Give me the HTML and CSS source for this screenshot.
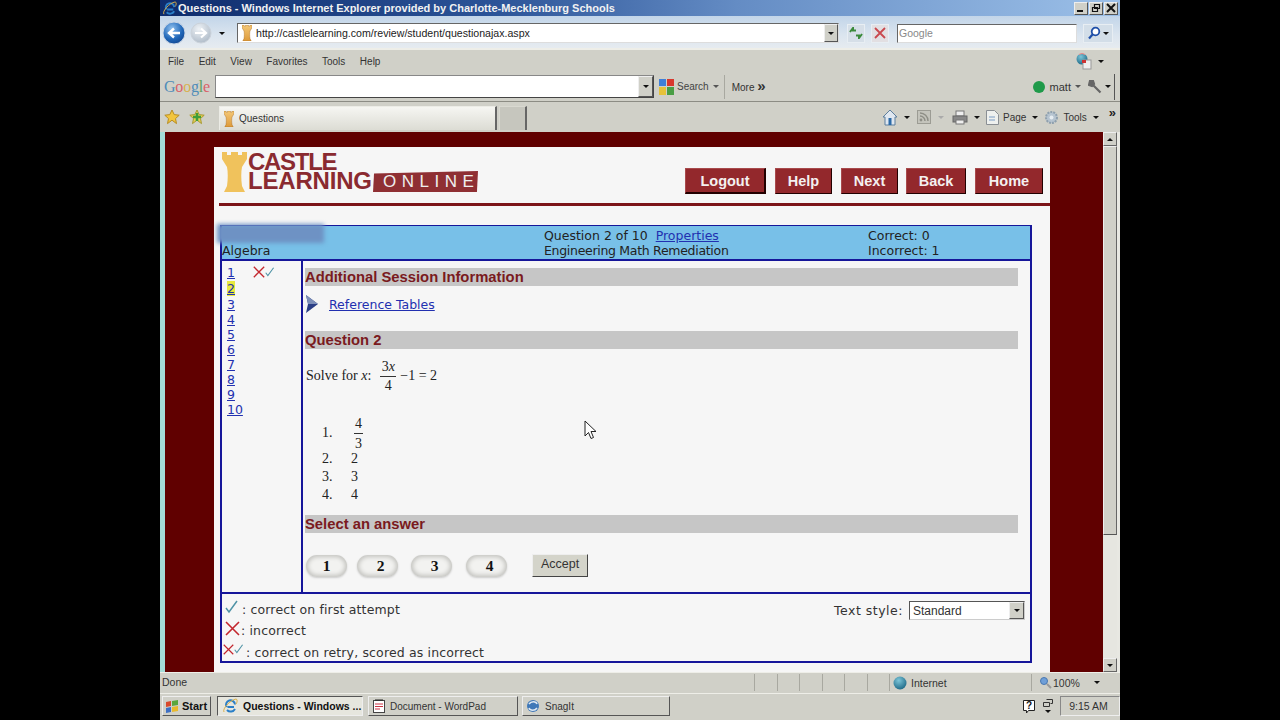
FILE: index.html
```html
<!DOCTYPE html>
<html lang="en">
<head>
  <meta charset="UTF-8" />
  <title>Questions - Windows Internet Explorer</title>
  <link rel="stylesheet" href="styles.css">
</head>
<body>
  <svg class="defs" width="0" height="0">
    <defs>
      <linearGradient id="tabTower" x1="0" x2="0" y1="0" y2="1"><stop offset="0" stop-color="#f4c877"/><stop offset="1" stop-color="#dd9a3a"/></linearGradient>
      <radialGradient id="blueBall" cx="0.4" cy="0.3" r="0.8"><stop offset="0" stop-color="#8fc0ee"/><stop offset="0.6" stop-color="#1f66b8"/><stop offset="1" stop-color="#0f3f86"/></radialGradient>
      <radialGradient id="greyBall" cx="0.4" cy="0.3" r="0.8"><stop offset="0" stop-color="#eef2f6"/><stop offset="1" stop-color="#a9b6c4"/></radialGradient>
      <radialGradient id="globeBall" cx="0.4" cy="0.3" r="0.8"><stop offset="0" stop-color="#7cc5d8"/><stop offset="1" stop-color="#14607f"/></radialGradient>
      <symbol id="tower" viewBox="0 0 25 40"><path d="M0 0h5v3h4V0h7v3h4V0h5v7l-5 8c-1 5-1 12 0 19l3 6H2l3-6c1-7 1-14 0-19L0 7z"/></symbol>
      <symbol id="check" viewBox="0 0 14 14"><path d="M1 8l3 4 8-11" fill="none" stroke="#4f93a6" stroke-width="1.5"/></symbol>
      <symbol id="cross" viewBox="0 0 15 15"><path d="M1 1l13 13M14 1L1 14" fill="none" stroke="#c3272e" stroke-width="1.6"/></symbol>
      <symbol id="iconE" viewBox="0 0 16 16"><path d="M12 9H5.500M4.600 9a4.500 4.500 0 1 1 8.400-2.500M13 11a5 5 0 0 1-8 1" fill="none" stroke="#2a7fc8" stroke-width="2"/><path d="M2 14C0 11 8 2 14 1c2 0 1 4 0 5" fill="none" stroke="#d9b04a" stroke-width="1"/></symbol>
    </defs>
  </svg>

  <div class="screen">
    <div class="titlebar">
      <svg class="ie-icon" width="16" height="16"><use href="#iconE"/></svg>
      <span class="title-text">Questions - Windows Internet Explorer provided by Charlotte-Mecklenburg Schools</span>
      <div class="win-btns">
        <span class="win-btn"><svg width="10" height="10"><path d="M1 8h6" stroke="#111" stroke-width="2"/></svg></span>
        <span class="win-btn"><svg width="10" height="10"><path d="M3.500 1.500h5v4h-5zM1.500 4.500h5v4h-5z" fill="none" stroke="#111" stroke-width="1.200"/></svg></span>
        <span class="win-btn"><svg width="10" height="10"><path d="M1 1l8 8M9 1L1 9" stroke="#111" stroke-width="2"/></svg></span>
      </div>
    </div>

    <div class="addressbar">
      <svg class="nav-back" width="24" height="24"><circle cx="12" cy="12" r="11" fill="url(#blueBall)" stroke="#cbd7e6"/><path d="M18 12H8M12 7.500L7 12l5 4.500" fill="none" stroke="#fff" stroke-width="2.400"/></svg>
      <svg class="nav-fwd" width="22" height="22"><circle cx="11" cy="11" r="10" fill="url(#greyBall)" stroke="#cbd2da"/><path d="M5 11h10M11 6.500l5 4.500-5 4.500" fill="none" stroke="#fff" stroke-width="2.200"/></svg>
      <span class="arrow dark nav-drop"></span>
      <div class="address-field">
        <svg class="tower-small" width="10" height="16" fill="url(#tabTower)" stroke="#a5651d" stroke-width="1"><use href="#tower"/></svg>
        <span class="url">http://castlelearning.com/review/student/questionajax.aspx</span>
        <span class="drop-btn"><span class="arrow dark"></span></span>
      </div>
      <span class="tool-btn refresh"><svg width="14" height="12"><path d="M1 5l3-4v2.500h3M13 7l-3 4V8.500H7" fill="none" stroke="#3a8a3a" stroke-width="2"/></svg></span>
      <span class="tool-btn stop"><svg width="12" height="12"><path d="M1 1l10 10M11 1L1 11" stroke="#c9484e" stroke-width="1.800"/></svg></span>
      <div class="search-field">Google</div>
      <span class="search-btn">
        <svg width="14" height="14"><circle cx="8.500" cy="5.500" r="3.800" fill="#fff" stroke="#1f4fa8" stroke-width="1.800"/><path d="M6 8l-4 4.500" stroke="#1f4fa8" stroke-width="2.200"/></svg>
        <span class="arrow dark"></span>
      </span>
    </div>

    <div class="menubar">
      <nav class="menu-items">
        <span>File</span><span>Edit</span><span>View</span><span>Favorites</span><span>Tools</span><span>Help</span>
      </nav>
      <div class="menu-right">
        <svg width="16" height="18"><circle cx="6" cy="7" r="5.500" fill="url(#globeBall)"/><path d="M3 2.500a5 5 0 0 1 6 0" stroke="#e88" fill="none"/><rect x="7" y="8" width="8" height="9" fill="#eee" stroke="#999"/><rect x="6" y="8" width="4" height="3" fill="#c33"/></svg>
        <span class="arrow dark"></span>
      </div>
    </div>

    <div class="googlebar">
      <span class="g-logo"><b class="g-blue">G</b><b class="g-red">o</b><b class="g-yellow">o</b><b class="g-blue">g</b><b class="g-green">l</b><b class="g-red">e</b></span>
      <div class="g-input"><span class="drop-btn"><span class="arrow dark"></span></span></div>
      <div class="g-search">
        <svg width="15" height="16"><rect x="0" y="0" width="7" height="7" fill="#3f7fd8"/><rect x="8" y="0" width="7" height="7" fill="#d8382e"/><rect x="0" y="8" width="7" height="8" fill="#e6c23a"/><rect x="8" y="8" width="7" height="8" fill="#4a9e45"/></svg>
        <span>Search</span><span class="arrow"></span>
      </div>
      <span class="g-sep"></span>
      <span class="g-more">More <b>&raquo;</b></span>
      <div class="g-user">
        <span class="status-dot"></span><span>matt</span><span class="arrow"></span>
        <svg class="wrench" width="14" height="14"><path d="M12.500 12.500L5 5M2 1l3 0 1 3-2 2-3-1z" fill="#666" stroke="#666" stroke-width="2.200"/></svg>
        <span class="arrow dark"></span>
      </div>
    </div>

    <div class="tabbar">
      <svg class="fav-star" width="16" height="16"><path d="M8 1l2.200 4.600 5 .6-3.700 3.400 1 5L8 11.200 3.500 14.600l1-5L.8 6.200l5-.6z" fill="#f2c53d" stroke="#b88d22"/></svg>
      <svg class="fav-add" width="16" height="16"><path d="M8 1l2.200 4.600 5 .6-3.700 3.400 1 5L8 11.200 3.500 14.600l1-5L.8 6.200l5-.6z" fill="#e6cf55" stroke="#a89a32"/><path d="M8 4v8M4 8h8" stroke="#3f9e3a" stroke-width="2.500"/></svg>
      <div class="tab-active">
        <svg class="tower-small" width="10" height="16" fill="url(#tabTower)" stroke="#a5651d" stroke-width="1"><use href="#tower"/></svg>
        <span>Questions</span>
      </div>
      <div class="tab-new"></div>
      <div class="cmd-bar">
        <svg width="16" height="17"><path d="M1 8l7-7 7 7h-2v8H3V8z" fill="#dfe7f0" stroke="#5d7f9e"/><rect x="6.500" y="9" width="3" height="7" fill="#2a6aa8"/></svg>
        <span class="arrow dark"></span>
        <svg class="cmd-rss" width="14" height="14"><rect x=".5" y=".5" width="13" height="13" fill="#c4c4bc" stroke="#9c9c94"/><circle cx="4" cy="10" r="1.400" fill="#8e8e86"/><path d="M3 6a5 5 0 0 1 5 5M3 3a8 8 0 0 1 8 8" fill="none" stroke="#8e8e86" stroke-width="1.400"/></svg>
        <span class="arrow cmd-rss-arrow"></span>
        <svg class="cmd-print" width="16" height="15"><rect x="4" y="1" width="8" height="5" fill="#eee" stroke="#777"/><rect x="1" y="6" width="14" height="6" fill="#888" stroke="#666"/><rect x="4" y="10" width="8" height="4" fill="#eee" stroke="#777"/></svg>
        <span class="arrow dark"></span>
        <svg class="cmd-page" width="13" height="15"><path d="M.5.5h8l4 4v10H.5z" fill="#eef0ee" stroke="#8a8f94"/><path d="M3 7h6M3 10h6" stroke="#7a9cc4"/></svg>
        <span class="cmd-label">Page</span>
        <span class="arrow dark"></span>
        <svg class="cmd-gear" width="15" height="15"><circle cx="7.500" cy="7.500" r="5.500" fill="#b6c4d0" stroke="#8fa0ae" stroke-width="2" stroke-dasharray="2 1"/><circle cx="7.500" cy="7.500" r="2" fill="#e6ecf1"/></svg>
        <span class="cmd-label">Tools</span>
        <span class="arrow dark"></span>
        <b class="cmd-more">&raquo;</b>
      </div>
    </div>

    <div class="viewport">
      <div class="canvas">
        <div class="page">
          <header class="page-head">
            <div class="logo">
              <svg class="logo-tower" width="25" height="40" fill="#f0c25c"><use href="#tower"/></svg>
              <div class="logo-words">
                <div class="logo-castle">CASTLE</div>
                <div class="logo-learning">LEARNING</div>
              </div>
              <div class="logo-online">ONLINE</div>
            </div>
            <nav class="head-btns">
              <a class="head-btn logout">Logout</a>
              <a class="head-btn help">Help</a>
              <a class="head-btn next">Next</a>
              <a class="head-btn back">Back</a>
              <a class="head-btn home">Home</a>
            </nav>
          </header>
          <div class="head-rule"></div>

          <div class="frame">
            <div class="info">
              <div class="info-name"></div>
              <div class="info-col">
                <div class="info-blank"></div>
                <div>Algebra</div>
              </div>
              <div class="info-col">
                <div>Question 2 of 10 &nbsp;<a class="link">Properties</a></div>
                <div class="info-course">Engineering Math Remediation</div>
              </div>
              <div class="info-col">
                <div>Correct: 0</div>
                <div>Incorrect: 1</div>
              </div>
            </div>

            <div class="body-row">
              <aside class="sidebar">
                <div class="q-row first">
                  <a class="link">1</a>
                  <span class="q-marks"><svg width="12" height="12"><use href="#cross"/></svg><svg width="10" height="10"><use href="#check"/></svg></span>
                </div>
                <div class="q-row second"><a class="link current">2</a></div>
                <div class="q-row"><a class="link">3</a></div>
                <div class="q-row"><a class="link">4</a></div>
                <div class="q-row"><a class="link">5</a></div>
                <div class="q-row"><a class="link">6</a></div>
                <div class="q-row"><a class="link">7</a></div>
                <div class="q-row"><a class="link">8</a></div>
                <div class="q-row"><a class="link">9</a></div>
                <div class="q-row"><a class="link">10</a></div>
              </aside>

              <main class="content">
                <h2 class="bar">Additional Session Information</h2>
                <div class="ref-row">
                  <svg width="12" height="18"><path d="M0 0l12 9L0 18l2-9z" fill="#2b3f86"/><path d="M0 0l12 9H2z" fill="#7d8fb8"/></svg>
                  <a class="link">Reference Tables</a>
                </div>
                <h2 class="bar">Question 2</h2>
                <div class="solve">
                  <span>Solve for <i>x</i>:</span>
                  <span class="frac"><span class="num">3<i>x</i></span><span>4</span></span>
                  <span>&minus;1 = 2</span>
                </div>
                <ol class="options">
                  <li class="opt tall"><span class="opt-n">1.</span><span class="frac small"><span class="num">4</span><span>3</span></span></li>
                  <li class="opt"><span class="opt-n">2.</span><span>2</span></li>
                  <li class="opt"><span class="opt-n">3.</span><span>3</span></li>
                  <li class="opt"><span class="opt-n">4.</span><span>4</span></li>
                </ol>
                <h2 class="bar">Select an answer</h2>
                <div class="answers">
                  <span class="pill">1</span>
                  <span class="pill p2">2</span>
                  <span class="pill p3">3</span>
                  <span class="pill p4">4</span>
                  <span class="accept">Accept</span>
                </div>
              </main>
            </div>

            <footer class="legend">
              <div class="legend-list">
                <div class="legend-row r1"><svg width="14" height="14"><use href="#check"/></svg><span>: correct on first attempt</span></div>
                <div class="legend-row r2"><svg width="15" height="15"><use href="#cross"/></svg><span>: incorrect</span></div>
                <div class="legend-row r3"><span class="marks"><svg width="11" height="11"><use href="#cross"/></svg><svg width="10" height="10"><use href="#check"/></svg></span><span>: correct on retry, scored as incorrect</span></div>
              </div>
              <div class="text-style">
                <span>Text style:</span>
                <div class="select"><span>Standard</span><span class="drop-btn"><span class="arrow dark"></span></span></div>
              </div>
            </footer>
          </div>
        </div>
        <svg class="cursor" width="13" height="21"><path d="M1 1v15l3.500-3.500 2.500 6 2.500-1-2.500-6h5z" fill="#fff" stroke="#222"/></svg>
      </div>
      <div class="scrollbar">
        <span class="sb-btn"><span class="arrow up"></span></span>
        <span class="sb-thumb"></span>
        <span class="sb-track"></span>
        <span class="sb-btn"><span class="arrow dark"></span></span>
      </div>
    </div>

    <div class="statusbar">
      <span class="st-text">Done</span>
      <span class="st-cell"></span><span class="st-cell"></span><span class="st-cell"></span><span class="st-cell"></span><span class="st-cell"></span><span class="st-cell"></span>
      <div class="st-zone">
        <svg width="14" height="14"><circle cx="7" cy="7" r="6.500" fill="url(#globeBall)"/></svg>
        <span>Internet</span>
      </div>
      <div class="st-zoom">
        <svg width="13" height="13"><circle cx="5" cy="5" r="3.500" fill="#6f9fd8" stroke="#4a78b0"/><path d="M8 8l4 4" stroke="#999" stroke-width="2"/></svg>
        <span>100%</span>
        <span class="arrow dark"></span>
      </div>
    </div>

    <div class="taskbar">
      <div class="start"><svg width="14" height="13"><path d="M1 2l5-1v5l-5 1z" fill="#d8492c"/><path d="M7 1l6-1v5l-6 1z" fill="#5aa63c"/><path d="M1 8l5-1v5l-5 1z" fill="#3d6fc4"/><path d="M7 7l6-1v5l-6 1z" fill="#e8b92c"/></svg><b>Start</b></div>
      <div class="task active"><svg width="16" height="16"><use href="#iconE"/></svg><b>Questions - Windows ...</b></div>
      <div class="task wordpad"><svg width="12" height="14"><rect x=".5" y="1.500" width="11" height="12" fill="#fff" stroke="#444"/><path d="M2 5h8M2 7.500h8M2 10h5" stroke="#c34" stroke-width="1"/><path d="M2 1h8" stroke="#222"/></svg><span>Document - WordPad</span></div>
      <div class="task snagit"><svg width="14" height="14"><circle cx="7" cy="7" r="6" fill="#3f78b8"/><path d="M3 5c2-3 7-3 8 0M11 9c-2 3-7 3-8 0" fill="none" stroke="#dfe9f3" stroke-width="1.500"/></svg><span>SnagIt</span></div>
      <div class="tray">
        <svg width="14" height="15"><path d="M1.500 1.500h11v10h-6l-2 2.500v-2.500h-3z" fill="#fff" stroke="#222"/><text x="7" y="10" text-anchor="middle" class="tray-q">?</text></svg>
        <div class="tray-switch"><svg width="10" height="8"><path d="M3.500.5h6v4h-2M.5 3.500h6v4h-6z" fill="none" stroke="#333"/></svg><span class="arrow dark"></span></div>
        <div class="clock">9:15 AM</div>
      </div>
    </div>
  </div>
</body>
</html>
```

FILE: styles.css
```css
/* Base */
* { margin: 0; padding: 0; box-sizing: border-box; }
html, body { height: 100%; overflow: hidden; }
body { background: #000; font-family: "Liberation Sans", sans-serif; font-size: 11px; color: #2a2a2a; }
.defs { display: block; height: 0; }
svg { display: block; flex: none; }
.screen { width: 960px; height: 720px; margin: 0 auto; background: #d0d0c8; display: flex; flex-direction: column; }

/* Little dropdown triangle used all over the chrome */
.arrow { display: inline-block; width: 0; height: 0; border-left: 3px solid transparent; border-right: 3px solid transparent; border-top: 3px solid #555; flex: none; }
.arrow.dark { border-top-color: #111; }
.arrow.up { border-top: 0; border-bottom: 3px solid #111; }

/* Title bar */
.titlebar { height: 16px; display: flex; align-items: center; padding-left: 2px; background: linear-gradient(90deg, #0e2c6c 0%, #2c5498 35%, #648cc4 60%, #9cc0e8 100%); }
.ie-icon { width: 15px; height: 15px; }
.title-text { margin-left: 1px; color: #f2f2f2; font-weight: bold; font-size: 11px; white-space: nowrap; }
.win-btns { margin-left: auto; margin-right: 2px; display: flex; gap: 1px; }
.win-btn { width: 14px; height: 13px; background: #d0d0c8; border: 1px solid; border-color: #eee #555 #555 #eee; display: flex; align-items: center; justify-content: center; }

/* Address row */
.addressbar { height: 34px; padding: 2px 0 0 2px; display: flex; align-items: center; background: linear-gradient(180deg, #c2d5e9 0%, #dbe5ef 60%, #e6ebf0 100%); border-bottom: 2px solid #eeeee8; }
.nav-fwd { margin-left: 4px; }
.nav-drop { margin-left: 7px; }
.address-field { margin-left: 12px; width: 602px; height: 20px; background: #fff; border: 1px solid; border-color: #666 #ddd #ddd #666; display: flex; align-items: center; padding-left: 4px; }
.url { margin-left: 4px; font-size: 10.600px; color: #222; }
.drop-btn { margin-left: auto; width: 14px; height: 100%; background: #d0d0c8; border: 1px solid; border-color: #eee #555 #555 #eee; display: flex; align-items: center; justify-content: center; }
.tool-btn { width: 18px; height: 19px; display: flex; align-items: center; justify-content: center; background: #d6dfe8; border: 1px solid #e8eef3; }
.refresh { margin-left: 8px; }
.stop { margin-left: 6px; background: #e2dfe2; }
.search-field { margin-left: 8px; width: 180px; height: 19px; background: #fff; border: 1px solid; border-color: #666 #ddd #ddd #666; color: #888; font-size: 10.500px; line-height: 17px; padding-left: 1px; }
.search-btn { margin-left: 6px; width: 30px; height: 19px; background: #d3dee8; display: flex; align-items: center; justify-content: space-between; padding: 0 3px; border: 1px solid #e8eef3; }

/* Menu row */
.menubar { height: 22px; display: flex; align-items: center; padding-left: 8px; padding-right: 16px; }
.menu-items { display: flex; gap: 14.500px; font-size: 10px; color: #333; }
.menu-right { margin-left: auto; display: flex; align-items: center; gap: 6px; }

/* Google toolbar */
.googlebar { height: 30px; display: flex; align-items: center; padding-left: 4px; padding-right: 5px; border-bottom: 1px solid #8c8c84; font-size: 10px; }
.g-logo { font-family: "Liberation Serif", serif; font-size: 16px; width: 51px; letter-spacing: -0.2px; }
.g-logo b { font-weight: normal; }
.g-blue { color: #4f8cb8; }
.g-red { color: #d8606a; }
.g-yellow { color: #d8b050; }
.g-green { color: #5a9e60; }
.g-input { width: 439px; height: 23px; background: #fff; border: 1px solid; border-color: #888 #444 #444 #888; display: flex; justify-content: flex-end; }
.g-input .drop-btn { width: 15px; }
.g-search { margin-left: 5px; display: flex; align-items: center; gap: 3px; color: #444; }
.g-search .arrow { margin-left: 1px; }
.g-sep { margin-left: 5px; width: 1px; height: 24px; background: #a8a8a0; }
.g-more { margin-left: 7px; color: #333; }
.g-more b { font-size: 15px; line-height: 11px; }
.g-user { margin-left: auto; display: flex; align-items: center; color: #333; padding-right: 3px; border-right: 1px solid #555; height: 26px; font-size: 11px; }
.status-dot { width: 12px; height: 12px; margin-right: 5px; border-radius: 50%; background: #1f9a4a; }
.g-user .arrow { margin-left: 4px; }
.wrench { margin-left: 7px; }
.g-user .arrow.dark { margin-left: 3px; }

/* Tab row */
.tabbar { height: 30px; display: flex; align-items: flex-end; padding-left: 4px; }
.fav-star { align-self: center; }
.fav-add { align-self: center; margin-left: 9px; }
.tab-active { margin: 0 0 2px 14px; width: 278px; height: 24px; background: linear-gradient(180deg, #f6f6f2, #dcdcd4); border: 1px solid #ecece6; border-right: 2px solid #666; border-bottom: 0; display: flex; align-items: center; padding-left: 4px; gap: 5px; color: #333; font-size: 10px; }
.tab-new { margin: 0 0 2px 2px; width: 28px; height: 24px; background: #c6c6be; border: 1px solid #d8d8d0; border-right: 2px solid #666; border-bottom: 0; }
.cmd-bar { margin-left: auto; align-self: center; display: flex; align-items: center; padding-right: 4px; color: #333; font-size: 10px; }
.cmd-bar .arrow { margin-left: 6px; }
.cmd-rss { margin-left: 7px; }
.cmd-bar .cmd-rss-arrow { border-top-color: #aaa; margin-left: 7px; }
.cmd-print { margin-left: 8px; }
.cmd-page { margin-left: 6px; }
.cmd-label { margin-left: 4px; }
.cmd-gear { margin-left: 6px; }
.cmd-more { margin-left: 10px; margin-bottom: 8px; font-size: 13px; line-height: 10px; color: #222; }

/* Browser viewport */
.viewport { height: 540px; display: flex; }
.canvas { position: relative; flex: 1; background: #600000; border-left: 5px solid #a4dcd8; padding: 15px 0 0 49px; overflow: hidden; }
.page { width: 836px; height: 527px; background: #f6f6f6; }
.cursor { position: absolute; left: 419px; top: 288px; }

.scrollbar { width: 17px; padding-right: 3px; background: #e8e8e2; display: flex; flex-direction: column; }
.sb-btn { height: 14px; flex: none; background: #d0d0c8; border: 1px solid; border-color: #eee #666 #666 #eee; display: flex; align-items: center; justify-content: center; }
.sb-thumb { height: 389px; flex: none; background: #d0d0c8; border: 1px solid; border-color: #eee #666 #555 #eee; }
.sb-track { flex: 1; background: #e6e6e0; }

/* Site header */
.page-head { height: 56px; display: flex; justify-content: space-between; align-items: flex-end; padding: 0 7px 9px 8px; }
.logo { display: flex; align-self: flex-start; margin-top: 5px; }
.logo-tower { margin-bottom: 6px; }
.logo-words { margin-left: 1px; width: 125px; font-weight: bold; font-size: 24px; line-height: 19px; color: #8a2a30; }
.logo-castle { letter-spacing: -1.300px; }
.logo-learning { letter-spacing: -0.200px; }
.logo-online { align-self: flex-start; margin-top: 19px; width: 105px; height: 21px; background: #8f2f33; clip-path: polygon(1% 12%, 100% 0, 99% 100%, 0 100%); color: #eee; font-size: 17px; line-height: 22px; letter-spacing: 5.500px; padding-left: 10px; white-space: nowrap; }
.head-btns { display: flex; }
.head-btn { height: 26px; background: #93282c; border: 1px solid; border-color: #a84a4c #200 #200 #a84a4c; color: #f4f0f0; font-size: 14.500px; font-weight: bold; line-height: 24px; text-align: center; margin-left: 9px; }
.logout { width: 81px; border-width: 1px 2px 2px 1px; }
.help { width: 57px; }
.next { width: 57px; margin-left: 9px; }
.back { width: 60px; margin-left: 8px; }
.home { width: 68px; }
.head-rule { margin-left: 5px; height: 3px; background: #7c1418; }

/* Question frame */
.frame { margin: 19px 0 0 6px; width: 812px; height: 438px; border: 2px solid #16169a; border-top-width: 1px; font-family: "DejaVu Sans", sans-serif; font-size: 12.500px; display: flex; flex-direction: column; }
.info { position: relative; height: 35px; background: #78c0e8; border-bottom: 2px solid #16169a; display: grid; grid-template-columns: 322px 324px 1fr; padding-top: 2px; line-height: 15px; color: #222; }
.info-blank { height: 15px; }
.info-name { position: absolute; left: -5px; top: -2px; width: 107px; height: 19px; background: #6e92c4; filter: blur(2px); }
.info-col { min-width: 0; }
.info-course { letter-spacing: -0.300px; }
.link { color: #2230b0; text-decoration: underline; }
.body-row { flex: 1; display: flex; border-bottom: 2px solid #16169a; }

/* Question list */
.sidebar { width: 81px; border-right: 2px solid #16169a; padding: 3px 0 0 5px; line-height: 15px; }
.q-row { height: 15px; display: flex; align-items: center; }
.q-row.first { height: 16px; }
.q-row.second { height: 17px; }
.current { background: #e8e840; }
.q-marks { margin-left: 18px; display: flex; align-items: center; }

/* Main question column */
.content { flex: 1; padding: 7px 0 0 2px; color: #222; }
.bar { height: 18px; width: 713px; background: #c6c6c6; color: #7a1a20; font-family: "Liberation Sans", sans-serif; font-size: 14.800px; font-weight: bold; line-height: 18px; }
.ref-row { height: 18px; margin: 9px 0 18px 1px; display: flex; align-items: center; gap: 11px; }
.solve { height: 34px; margin: 10px 0 0 1px; display: flex; align-items: center; font-family: "Liberation Serif", serif; font-size: 14px; }
.frac { display: inline-flex; flex-direction: column; align-items: center; width: 16px; margin: 0 4px 0 9px; line-height: 18px; }
.num { border-bottom: 1px solid #333; width: 100%; text-align: center; }
.options { list-style: none; margin: 23px 0 11px 17px; font-family: "Liberation Serif", serif; font-size: 14px; }
.opt { height: 18px; display: flex; align-items: center; }
.opt.tall { height: 34px; }
.opt-n { width: 29px; }
.frac.small { margin: 0 0 0 3px; width: 9px; line-height: 19px; font-size: 14px; }
.answers { margin-top: 20px; height: 24px; display: flex; align-items: center; }
.pill { width: 41px; height: 22px; margin: 2px 0 0 1px; border-radius: 11px; background: #f2f2f0; box-shadow: inset 0 0 4px 2px #c4c4c0, 0 1px 2px #ccc; font-family: "Liberation Serif", serif; font-weight: bold; font-size: 15.500px; line-height: 22px; text-align: center; color: #111; }
.p2 { margin-left: 10px; padding-left: 6px; }
.p3 { margin-left: 13px; padding-left: 6px; }
.p4 { margin-left: 14px; padding-left: 6px; }
.accept { margin-left: 25px; width: 56px; height: 23px; background: #d4d4ca; border: 1px solid; border-color: #eee #444 #444 #eee; font-family: "Liberation Sans", sans-serif; font-size: 12.500px; line-height: 19px; text-align: center; color: #333; }

/* Legend under the frame */
.legend { flex: none; height: 67px; display: flex; justify-content: space-between; padding: 0 5px 0 3px; color: #333; letter-spacing: 0.150px; }
.legend-list { display: flex; flex-direction: column; padding-top: 3px; }
.legend-row { height: 21.500px; display: flex; align-items: center; }
.legend-row span { white-space: nowrap; }
.r1 { gap: 3px; padding-top: 4px; }
.r1 svg { margin-top: -6px; }
.r2 { gap: 1px; padding-top: 4px; }
.r2 svg { margin-top: -5px; }
.r3 { padding-top: 5px; margin-left: -2px; gap: 2px; }
.marks { display: flex; margin-top: -6px; }
.text-style { display: flex; gap: 6px; align-items: flex-start; padding-top: 7px; line-height: 19px; letter-spacing: 0.500px; }
.select { width: 116px; height: 19px; background: #fff; border: 1px solid; border-color: #555 #ccc #ccc #555; display: flex; font-family: "Liberation Sans", sans-serif; padding-left: 3px; line-height: 18px; font-size: 12px; letter-spacing: 0; }
.select .drop-btn { width: 15px; }

/* Status bar */
.statusbar { height: 21px; display: flex; align-items: center; padding: 0 0 1px 2px; border-top: 1px solid #eeeee8; font-size: 10.500px; color: #333; }
.st-text { width: 593px; border-right: 1px solid #a8a8a0; height: 17px; line-height: 17px; }
.st-cell { width: 22.500px; height: 17px; border-right: 1px solid #a8a8a0; }
.st-zone { width: 142px; display: flex; align-items: center; gap: 4px; padding-left: 3px; height: 17px; border-right: 1px solid #a8a8a0; }
.st-zoom { flex: 1; display: flex; align-items: center; padding-left: 7px; gap: 1px; }
.st-zoom .arrow { margin-left: 13px; }

/* Windows taskbar */
.taskbar { height: 27px; display: flex; align-items: flex-start; padding: 2px 0 0 2px; font-size: 10px; color: #333; border-top: 1px solid #eeeee8; }
.start { width: 49px; height: 20px; display: flex; align-items: center; gap: 3px; padding-left: 2px; background: #d0d0c8; border: 1px solid; border-color: #eee #555 #555 #eee; font-size: 11px; color: #111; }
.task { height: 20px; display: flex; align-items: center; gap: 5px; padding-left: 4px; background: #d0d0c8; border: 1px solid; border-color: #eee #555 #555 #eee; }
.task.active { margin-left: 6px; width: 146px; background: #e6e6de; border-color: #555 #eee #eee #555; color: #111; }
.task.active b { font-size: 10.500px; white-space: nowrap; }
.wordpad { margin-left: 5px; width: 150px; }
.snagit { margin-left: 4px; width: 148px; padding-left: 3px; }
.tray { margin-left: auto; display: flex; align-items: center; }
.tray-q { font-size: 10px; font-weight: bold; font-family: "Liberation Sans", sans-serif; fill: #111; }
.tray-switch { margin-left: 7px; display: flex; flex-direction: column; align-items: center; gap: 3px; }
.clock { margin-left: 7px; width: 60px; height: 20px; line-height: 18px; padding-right: 3px; text-align: center; border: 1px solid; border-color: #888 #eee #eee #888; font-size: 10.500px; }
```
